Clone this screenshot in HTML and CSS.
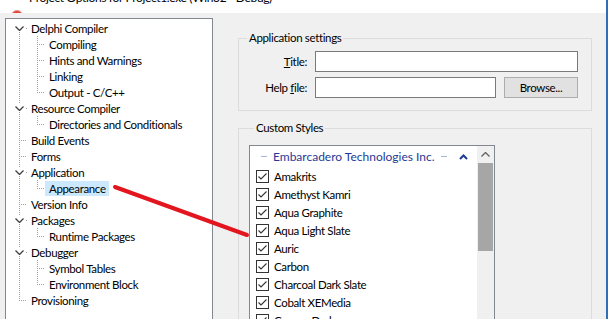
FILE: index.html
```html
<!DOCTYPE html>
<html lang="en">
  <head>
    <meta charset="UTF-8" />
    <title>Project Options for Project1.exe (Win32 - Debug)</title>
    <link rel="stylesheet" href="styles.css">
  </head>
  <body>
    <div class="titlebar">
      <span class="app-icon"></span>
      <span class="title-text">Project Options for Project1.exe (Win32 - Debug)</span>
      <span class="close-glyph">✕</span>
    </div>

    <div class="main">
      <div class="tree">
        <div class="node"><span class="guide exp first"><svg class="chev" width="9" height="5" viewBox="0 0 9 5"><polyline points="0.5,0.5 4.5,4.5 8.5,0.5" /></svg></span><span class="label">Delphi Compiler</span></div>
        <div class="node"><span class="guide pipe"></span><span class="guide tee"></span><span class="label">Compiling</span></div>
        <div class="node"><span class="guide pipe"></span><span class="guide tee"></span><span class="label">Hints and Warnings</span></div>
        <div class="node"><span class="guide pipe"></span><span class="guide tee"></span><span class="label">Linking</span></div>
        <div class="node"><span class="guide pipe"></span><span class="guide elbow"></span><span class="label">Output - C/C++</span></div>
        <div class="node"><span class="guide exp"><svg class="chev" width="9" height="5" viewBox="0 0 9 5"><polyline points="0.5,0.5 4.5,4.5 8.5,0.5" /></svg></span><span class="label">Resource Compiler</span></div>
        <div class="node"><span class="guide pipe"></span><span class="guide elbow"></span><span class="label">Directories and Conditionals</span></div>
        <div class="node"><span class="guide tee"></span><span class="label">Build Events</span></div>
        <div class="node"><span class="guide tee"></span><span class="label">Forms</span></div>
        <div class="node"><span class="guide exp"><svg class="chev" width="9" height="5" viewBox="0 0 9 5"><polyline points="0.5,0.5 4.5,4.5 8.5,0.5" /></svg></span><span class="label">Application</span></div>
        <div class="node"><span class="guide pipe"></span><span class="guide elbow"></span><span class="label selected">Appearance</span></div>
        <div class="node"><span class="guide tee"></span><span class="label">Version Info</span></div>
        <div class="node"><span class="guide exp"><svg class="chev" width="9" height="5" viewBox="0 0 9 5"><polyline points="0.5,0.5 4.5,4.5 8.5,0.5" /></svg></span><span class="label">Packages</span></div>
        <div class="node"><span class="guide pipe"></span><span class="guide elbow"></span><span class="label">Runtime Packages</span></div>
        <div class="node"><span class="guide exp"><svg class="chev" width="9" height="5" viewBox="0 0 9 5"><polyline points="0.5,0.5 4.5,4.5 8.5,0.5" /></svg></span><span class="label">Debugger</span></div>
        <div class="node"><span class="guide pipe"></span><span class="guide tee"></span><span class="label">Symbol Tables</span></div>
        <div class="node"><span class="guide pipe"></span><span class="guide elbow"></span><span class="label">Environment Block</span></div>
        <div class="node"><span class="guide elbow"></span><span class="label">Provisioning</span></div>
      </div>

      <div class="options">
        <fieldset class="group settings">
          <legend>Application settings</legend>
          <div class="form-row">
            <label class="field-label"><u>T</u>itle:</label>
            <div class="edit wide"></div>
          </div>
          <div class="form-row">
            <label class="field-label">Help <u>f</u>ile:</label>
            <div class="edit narrow"></div>
            <button class="browse">Browse...</button>
          </div>
        </fieldset>

        <fieldset class="group styles">
          <legend>Custom Styles</legend>
          <div class="style-list">
            <div class="list-items">
              <div class="list-header">
                <span class="dash"></span>
                <span class="vendor">Embarcadero Technologies Inc.</span>
                <span class="dash"></span>
                <svg class="collapse" width="9" height="6" viewBox="0 0 9 6"><polyline points="1,5 4.5,1.5 8,5" /></svg>
              </div>
              <div class="style-item"><span class="check"><svg width="11" height="11" viewBox="0 0 11 11"><polyline points="1.5,5.5 4,8 9.5,2.5" /></svg></span>Amakrits</div>
              <div class="style-item"><span class="check"><svg width="11" height="11" viewBox="0 0 11 11"><polyline points="1.5,5.5 4,8 9.5,2.5" /></svg></span>Amethyst Kamri</div>
              <div class="style-item"><span class="check"><svg width="11" height="11" viewBox="0 0 11 11"><polyline points="1.5,5.5 4,8 9.5,2.5" /></svg></span>Aqua Graphite</div>
              <div class="style-item"><span class="check"><svg width="11" height="11" viewBox="0 0 11 11"><polyline points="1.5,5.5 4,8 9.5,2.5" /></svg></span>Aqua Light Slate</div>
              <div class="style-item"><span class="check"><svg width="11" height="11" viewBox="0 0 11 11"><polyline points="1.5,5.5 4,8 9.5,2.5" /></svg></span>Auric</div>
              <div class="style-item"><span class="check"><svg width="11" height="11" viewBox="0 0 11 11"><polyline points="1.5,5.5 4,8 9.5,2.5" /></svg></span>Carbon</div>
              <div class="style-item"><span class="check"><svg width="11" height="11" viewBox="0 0 11 11"><polyline points="1.5,5.5 4,8 9.5,2.5" /></svg></span>Charcoal Dark Slate</div>
              <div class="style-item"><span class="check"><svg width="11" height="11" viewBox="0 0 11 11"><polyline points="1.5,5.5 4,8 9.5,2.5" /></svg></span>Cobalt XEMedia</div>
              <div class="style-item"><span class="check"><svg width="11" height="11" viewBox="0 0 11 11"><polyline points="1.5,5.5 4,8 9.5,2.5" /></svg></span>Copper Dark</div>
            </div>
            <div class="scrollbar">
              <div class="scroll-up"><svg width="9" height="5" viewBox="0 0 9 5"><polyline points="0.5,4.5 4.5,0.5 8.5,4.5" /></svg></div>
              <div class="thumb"></div>
            </div>
          </div>
        </fieldset>
      </div>
    </div>

    <!-- annotation drawn over the dialog -->
    <svg class="pointer-line" width="608" height="319" viewBox="0 0 608 319">
      <line x1="115" y1="187" x2="247" y2="235" />
    </svg>
  </body>
</html>
```

FILE: styles.css
```css
* {
  box-sizing: border-box;
}

body {
  margin: 0;
  width: 608px;
  height: 319px;
  overflow: hidden;
  position: relative;
  background: #f0f0f0;
  border-right: 2px solid #2f6fb6;
  font-family: Lato, "Noto Sans", sans-serif;
  font-size: 11.5px;
  letter-spacing: -0.35px;
  color: #000;
}

/* window caption, mostly cut off at the top */
.titlebar {
  height: 13px;
  background: #fff;
  display: flex;
  align-items: flex-end;
  overflow: hidden;
}

.app-icon {
  width: 12px;
  height: 12px;
  margin: 0 6px -9px 11px;
  border-radius: 50%;
  background: #e0443c;
  border: 1px solid #f08a84;
  flex: none;
}

.title-text {
  line-height: 16px;
  margin-bottom: 7px;
  white-space: nowrap;
  font-size: 12px;
}

.close-glyph {
  margin-left: auto;
  margin-right: 14px;
  margin-bottom: 9px;
  line-height: 16px;
  font-family: "DejaVu Sans", sans-serif;
  font-size: 11px;
}

.main {
  display: flex;
  align-items: flex-start;
  padding: 5px 0 0 5px;
}

/* ---- options tree ---- */
.tree {
  width: 208px;
  height: 310px;
  flex: none;
  background: #fff;
  border: 1px solid #828790;
  border-bottom: none;
  padding: 1px 0 0 3px;
}

.node {
  display: flex;
  height: 16px;
  align-items: center;
}

.guide {
  width: 18px;
  height: 16px;
  flex: none;
  background-repeat: no-repeat;
}

.pipe {
  background-image: repeating-linear-gradient(to bottom, #a0a0a0 0 1px, transparent 1px 2px);
  background-size: 1px 16px;
  background-position: 10px 0;
}

.tee {
  background-image:
    repeating-linear-gradient(to bottom, #a0a0a0 0 1px, transparent 1px 2px),
    repeating-linear-gradient(to right, #a0a0a0 0 1px, transparent 1px 2px);
  background-size: 1px 16px, 8px 1px;
  background-position: 10px 0, 10px 8px;
}

.elbow {
  background-image:
    repeating-linear-gradient(to bottom, #a0a0a0 0 1px, transparent 1px 2px),
    repeating-linear-gradient(to right, #a0a0a0 0 1px, transparent 1px 2px);
  background-size: 1px 9px, 8px 1px;
  background-position: 10px 0, 10px 8px;
}

.exp {
  display: flex;
  align-items: center;
  background-image:
    repeating-linear-gradient(to bottom, #a0a0a0 0 1px, transparent 1px 2px),
    repeating-linear-gradient(to bottom, #a0a0a0 0 1px, transparent 1px 2px),
    linear-gradient(#a0a0a0, #a0a0a0);
  background-size: 1px 4px, 1px 4px, 1px 1px;
  background-position: 10px 0, 10px 12px, 17px 8px;
}

.exp.first {
  background-size: 0 0, 1px 4px, 1px 1px;
}

.chev {
  margin-left: 6px;
  fill: none;
  stroke: #404040;
  stroke-width: 1.3;
}

.label {
  padding: 0 3px 0 4px;
  line-height: 15px;
  white-space: nowrap;
}

.selected {
  background: #cce8ff;
}

/* ---- right side ---- */
.options {
  width: 354px;
  margin-left: 25px;
  margin-top: 12px;
  flex: none;
}

.group {
  margin: 0;
  border: 1px solid #dcdcdc;
  min-width: 0;
}

.group legend {
  line-height: 16px;
  padding: 0 2px;
}

.settings {
  padding: 5px 13px 12px 0;
}

.settings legend {
  margin-left: 8px;
}

.form-row {
  display: flex;
  align-items: center;
  gap: 8px;
  height: 21px;
}

.form-row + .form-row {
  margin-top: 5px;
}

.field-label {
  width: 68px;
  text-align: right;
  flex: none;
}

.edit {
  height: 21px;
  background: #fff;
  border: 1px solid #7a7a7a;
}

.edit.wide {
  width: 264px;
}

.edit.narrow {
  width: 181px;
}

.browse {
  width: 74px;
  height: 21px;
  padding: 0;
  background: #e1e1e1;
  border: 1px solid #adadad;
  font: inherit;
  letter-spacing: inherit;
  color: #000;
}

.styles {
  margin-top: 9px;
  padding: 9px 0 0 10px;
  height: 200px;
}

.styles legend {
  margin-left: 5px;
}

.style-list {
  width: 246px;
  height: 190px;
  display: flex;
  background: #fff;
  border: 1px solid #828790;
}

.list-items {
  flex: 1;
  min-width: 0;
}

.list-header {
  height: 21px;
  display: flex;
  align-items: center;
  gap: 6px;
  padding-left: 11px;
  white-space: nowrap;
}

.dash {
  width: 6px;
  height: 1px;
  flex: none;
  background: #a9b6d9;
}

.vendor {
  color: #1f3a97;
  font-size: 12px;
  letter-spacing: 0;
}

.collapse {
  margin-left: 6px;
  flex: none;
  fill: none;
  stroke: #1f3a97;
  stroke-width: 2;
}

.style-item {
  height: 18px;
  display: flex;
  align-items: center;
  gap: 5px;
  padding-left: 6px;
  white-space: nowrap;
}

.check {
  width: 13px;
  height: 13px;
  flex: none;
  border: 1px solid #333;
  background: #fff;
}

.check svg {
  display: block;
  fill: none;
  stroke: #333;
  stroke-width: 1.1;
}

.scrollbar {
  width: 17px;
  flex: none;
  background: #f0f0f0;
}

.scroll-up {
  height: 17px;
  display: flex;
  align-items: center;
  justify-content: center;
}

.scroll-up svg {
  fill: none;
  stroke: #606060;
  stroke-width: 1.3;
}

.thumb {
  height: 88px;
  margin: 0 1px;
  background: #a6a6a6;
}

.pointer-line {
  position: absolute;
  left: 0;
  top: 0;
  pointer-events: none;
}

.pointer-line line {
  stroke: #e3161f;
  stroke-width: 4;
  stroke-linecap: round;
}
```
